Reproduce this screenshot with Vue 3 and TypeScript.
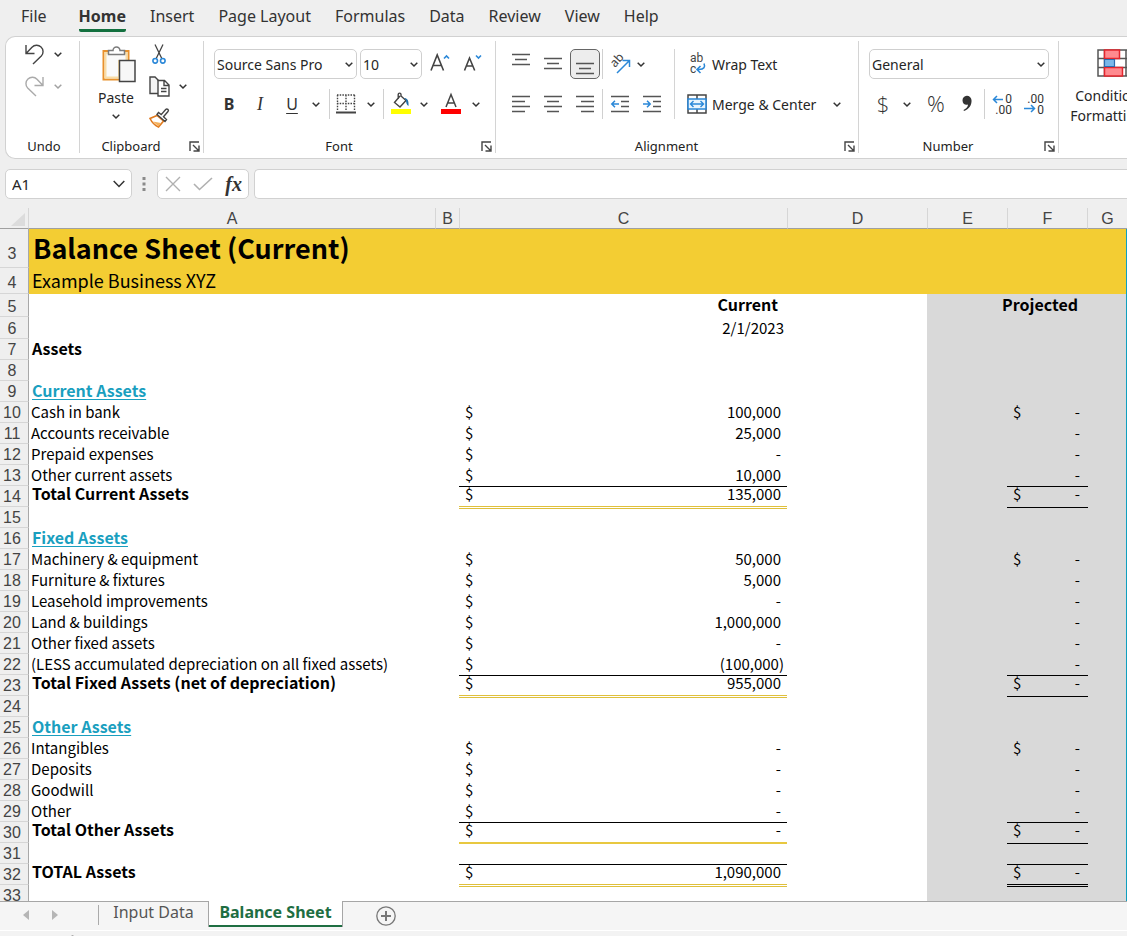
<script setup lang="ts">
import { ref } from 'vue'

interface Row {
  n: number
  label?: string
  kind?: 'section' | 'bold' | 'total'
  dollar?: boolean
  current?: string
  projDollar?: boolean
  projected?: string
  under?: 'double' | 'single'
  projUnder?: 'double' | 'single'
}

const menu = ['File', 'Home', 'Insert', 'Page Layout', 'Formulas', 'Data', 'Review', 'View', 'Help']
const columns = ['A', 'B', 'C', 'D', 'E', 'F', 'G']
const cellName = ref('A1')
const formula = ref('')

const item = (n: number, label: string, current = '-', projDollar = false): Row => ({
  n, label, dollar: true, current, projDollar, projected: '-',
})
const total = (n: number, label: string, current: string, under: 'double' | 'single', projUnder: 'double' | 'single'): Row => ({
  n, label, kind: 'total', dollar: true, current, projDollar: true, projected: '-', under, projUnder,
})

const rows: Row[] = [
  { n: 7, label: 'Assets', kind: 'bold' },
  { n: 8 },
  { n: 9, label: 'Current Assets', kind: 'section' },
  item(10, 'Cash in bank', '100,000', true),
  item(11, 'Accounts receivable', '25,000'),
  item(12, 'Prepaid expenses'),
  item(13, 'Other current assets', '10,000'),
  total(14, 'Total Current Assets', '135,000', 'double', 'single'),
  { n: 15 },
  { n: 16, label: 'Fixed Assets', kind: 'section' },
  item(17, 'Machinery & equipment', '50,000', true),
  item(18, 'Furniture & fixtures', '5,000'),
  item(19, 'Leasehold improvements'),
  item(20, 'Land & buildings', '1,000,000'),
  item(21, 'Other fixed assets'),
  item(22, '(LESS accumulated depreciation on all fixed assets)', '(100,000)'),
  total(23, 'Total Fixed Assets (net of depreciation)', '955,000', 'double', 'single'),
  { n: 24 },
  { n: 25, label: 'Other Assets', kind: 'section' },
  item(26, 'Intangibles', '-', true),
  item(27, 'Deposits'),
  item(28, 'Goodwill'),
  item(29, 'Other'),
  total(30, 'Total Other Assets', '-', 'single', 'single'),
  { n: 31 },
  total(32, 'TOTAL Assets', '1,090,000', 'double', 'double'),
  { n: 33 },
]
</script>

<template>
  <div class="app">
    <nav class="menu" aria-label="Ribbon tabs">
      <button v-for="m in menu" :key="m" class="menu-item" :class="{ active: m === 'Home' }">{{ m }}</button>
    </nav>

    <section class="ribbon" aria-label="Ribbon">
      <div class="group undo">
        <div class="undo-grid">
          <button aria-label="Undo"><svg width="22" height="22" viewBox="0 0 22 22" class="ln"><path d="M2 2v8.500h8.500M2.500 10 8 4.200a6.400 6.400 0 0 1 9.300 8.800L9 21" /></svg></button>
          <button aria-label="Undo history"><svg class="chev" width="8" height="5" viewBox="0 0 8 5"><path d="M.7.7 4 4 7.300.7" /></svg></button>
          <button aria-label="Redo" class="off"><svg width="22" height="22" viewBox="0 0 22 22" class="ln"><path d="M19 2v8.500h-8.500M18.500 10 13 4.200A6.400 6.400 0 0 0 3.700 13L12 21" /></svg></button>
          <button aria-label="Redo history" class="off"><svg class="chev" width="8" height="5" viewBox="0 0 8 5"><path d="M.7.7 4 4 7.300.7" /></svg></button>
        </div>
        <div class="group-label">Undo</div>
      </div>

      <div class="group clipboard">
        <div class="clip-body">
          <button class="paste">
            <svg class="paste-icon" width="34" height="38" viewBox="0 0 34 38" fill="none">
              <path d="M8 6H1.500v28.500H18M20 6h6.500v10" stroke="#e8912d" stroke-width="2" />
              <path d="M3.500 8v24.500H17V16h7.500V8z" fill="#fafafa" stroke="#f9dda6" stroke-width="2" />
              <path d="M6.500 9.500V5.500h4.500a3.500 3.500 0 0 1 7 0h4.500v4z" fill="#fff" stroke="#7c7c7c" stroke-width="1.500" />
              <path d="M17.500 15.500h15.500v21H17.500z" fill="#f7f7f7" stroke="#444" stroke-width="1.500" />
            </svg>
            <span>Paste</span>
            <svg class="chev" width="8" height="5" viewBox="0 0 8 5"><path d="M.7.7 4 4 7.300.7" /></svg>
          </button>
          <div class="clip-side">
            <button aria-label="Cut">
              <svg width="14" height="20" viewBox="0 0 14 20" fill="none" stroke-width="1.300"><path d="M3 .5 9.800 14.500M11 .5 4.200 14.500" stroke="#444" /><circle cx="3.200" cy="16.800" r="2.300" stroke="#2b88d8" stroke-width="1.600" /><circle cx="10.800" cy="16.800" r="2.300" stroke="#2b88d8" stroke-width="1.600" /></svg>
            </button>
            <span></span>
            <button aria-label="Copy">
              <svg width="21" height="21" viewBox="0 0 21 21" class="ln"><path d="M9 17.500H1V1h5l3.500 3.500" fill="#f4f4f4" /><path d="M9 4.500h6.500l4.500 4.500v11H9zM15 5v4.500h5M12 12.500h5.500M12 15.500h5.500" fill="#fff" /></svg>
            </button>
            <button aria-label="Copy options"><svg class="chev" width="8" height="5" viewBox="0 0 8 5"><path d="M.7.7 4 4 7.300.7" /></svg></button>
            <button aria-label="Format Painter">
              <svg width="20" height="20" viewBox="0 0 20 20" fill="none"><path d="M8 7.500 1 10.500c2 4 5 7 8.500 8.500l5-6z" fill="#fff" stroke="#e07a1f" stroke-width="1.600" /><path d="m4 13.500 8 1.500-2.500 3.500z" fill="#f5b05a" /><path d="m8 6.500 8 7 1.500-2-3-2.700 4.500-5.300a1.500 1.500 0 0 0-2.300-2L12.200 6.600 9.500 4.500z" fill="#fff" stroke="#444" stroke-width="1.400" /></svg>
            </button>
          </div>
        </div>
        <div class="group-label">Clipboard<button class="launch" aria-label="Clipboard settings"><svg width="11" height="11" viewBox="0 0 11 11" class="ln"><path d="M1 10V1h9M4 4l5.500 5.500M10 4.500V10H4.500" /></svg></button></div>
      </div>

      <div class="group font">
        <div class="font-top">
          <label class="combo"><select aria-label="Font"><option>Source Sans Pro</option></select><svg class="chev" width="8" height="5" viewBox="0 0 8 5"><path d="M.7.7 4 4 7.300.7" /></svg></label>
          <label class="combo"><select aria-label="Font size"><option>10</option></select><svg class="chev" width="8" height="5" viewBox="0 0 8 5"><path d="M.7.7 4 4 7.300.7" /></svg></label>
          <button aria-label="Increase font size"><svg width="20" height="20" viewBox="0 0 20 20" class="ln"><path d="M1 16.500 7.200 1 13.500 16.500M3.300 11.500h7.800" stroke-width="1.600" /><path d="m14 4.500 2.500-2.500L19 4.500" stroke="#2b88d8" stroke-width="1.600" /></svg></button>
          <button aria-label="Decrease font size"><svg width="20" height="20" viewBox="0 0 20 20" class="ln"><path d="M1.500 16.500 6.500 4l5.200 12.500M3.300 12h6.500" stroke-width="1.600" /><path d="m13 1.500 2.500 2.500L18 1.500" stroke="#2b88d8" stroke-width="1.600" /></svg></button>
        </div>
        <div class="font-bottom">
          <button class="glyph bold">B</button>
          <button class="glyph italic">I</button>
          <button class="glyph underline">U</button>
          <button aria-label="Underline options"><svg class="chev" width="8" height="5" viewBox="0 0 8 5"><path d="M.7.7 4 4 7.300.7" /></svg></button>
          <i class="sep"></i>
          <button aria-label="Borders"><svg width="20" height="20" viewBox="0 0 20 20" fill="none" stroke="#444"><path d="M1 1h18M1 9.500h18M1.500 1v16M10 1v16M18.500 1v16" stroke-width="1.400" stroke-dasharray="1.500 1.200" /><path d="M0 18.500h20" stroke-width="2" /></svg></button>
          <button aria-label="Border options"><svg class="chev" width="8" height="5" viewBox="0 0 8 5"><path d="M.7.7 4 4 7.300.7" /></svg></button>
          <i class="sep"></i>
          <button aria-label="Fill color"><svg width="20" height="22" viewBox="0 0 20 22" fill="none"><path d="m9 3-5.500 6.500L9 14l6-6.500-5-4.500V1.500a1.400 1.400 0 0 0-2.800 0V6" stroke="#444" stroke-width="1.400" /><path d="M13 5c3 0 5 2 4.500 8-2-1-2.500-4-2.500-6z" fill="#1f6fa8" /><path d="M0 16h20v5H0z" fill="#ff0" /></svg></button>
          <button aria-label="Fill color options"><svg class="chev" width="8" height="5" viewBox="0 0 8 5"><path d="M.7.7 4 4 7.300.7" /></svg></button>
          <button aria-label="Font color"><svg width="20" height="22" viewBox="0 0 20 22" fill="none"><path d="m5 14 5-12.500L15 14M6.800 10h6.400" stroke="#444" stroke-width="1.500" /><path d="M0 16h20v5H0z" fill="#f00" /></svg></button>
          <button aria-label="Font color options"><svg class="chev" width="8" height="5" viewBox="0 0 8 5"><path d="M.7.7 4 4 7.300.7" /></svg></button>
        </div>
        <div class="group-label">Font<button class="launch" aria-label="Font settings"><svg width="11" height="11" viewBox="0 0 11 11" class="ln"><path d="M1 10V1h9M4 4l5.500 5.500M10 4.500V10H4.500" /></svg></button></div>
      </div>

      <div class="group align">
        <div class="align-body">
          <div class="align-grid">
            <button aria-label="Top align"><svg width="18" height="22" viewBox="0 0 18 22" class="bars"><path d="M0 1.500h18M3 6.500h12M0 11.500h18" /></svg></button>
            <button aria-label="Middle align"><svg width="18" height="22" viewBox="0 0 18 22" class="bars"><path d="M0 5.500h18M3 10.500h12M0 15.500h18" /></svg></button>
            <button aria-label="Bottom align" class="pressed"><svg width="18" height="22" viewBox="0 0 18 22" class="bars"><path d="M0 10.500h18M3 15.500h12M0 20.500h18" /></svg></button>
            <i class="sep"></i>
            <button aria-label="Orientation"><svg width="22" height="22" viewBox="0 0 22 22"><text x="0" y="0" class="ab" transform="translate(6 15) rotate(-48)">ab</text><path d="M8 20 20 8M13.500 7.500h7V14" fill="none" stroke="#2b88d8" stroke-width="1.500" /></svg></button>
            <button aria-label="Orientation options"><svg class="chev" width="8" height="5" viewBox="0 0 8 5"><path d="M.7.7 4 4 7.300.7" /></svg></button>
          </div>
          <div class="align-grid second">
            <button aria-label="Align left"><svg width="18" height="18" viewBox="0 0 18 18" class="bars"><path d="M0 1.500h18M0 6.500h13M0 11.500h18M0 16.500h13" /></svg></button>
            <button aria-label="Center"><svg width="18" height="18" viewBox="0 0 18 18" class="bars"><path d="M0 1.500h18M3 6.500h12M0 11.500h18M3 16.500h12" /></svg></button>
            <button aria-label="Align right"><svg width="18" height="18" viewBox="0 0 18 18" class="bars"><path d="M0 1.500h18M5 6.500h13M0 11.500h18M5 16.500h13" /></svg></button>
            <i class="sep"></i>
            <button aria-label="Decrease indent"><svg width="18" height="18" viewBox="0 0 18 18" class="bars"><path d="M0 1.500h18M10 6.500h8M10 11.500h8M0 16.500h18" /><path d="M8 9H1M4 5.800.8 9 4 12.200" stroke="#2b88d8" /></svg></button>
            <button aria-label="Increase indent"><svg width="18" height="18" viewBox="0 0 18 18" class="bars"><path d="M0 1.500h18M10 6.500h8M10 11.500h8M0 16.500h18" /><path d="M0 9h7M4 5.800 7.200 9 4 12.200" stroke="#2b88d8" /></svg></button>
          </div>
          <i class="tall-sep"></i>
          <button class="wide wrap">
            <svg width="20" height="22" viewBox="0 0 20 22"><text x="3" y="9" class="abc">ab</text><text x="3" y="20" class="abc">c</text><path d="M17 10.500c1.500 3.500 0 6-5 6H10M13.500 13 10 16.500l3.500 3.500" fill="none" stroke="#2b88d8" stroke-width="1.600" /></svg>
            <span>Wrap Text</span>
          </button>
          <button class="wide merge">
            <svg width="20" height="20" viewBox="0 0 20 20" fill="none"><path d="M1 1h18v18H1zM10 1v4M10 15v4" stroke="#444" stroke-width="1.500" /><path d="M1 5h18v10H1z" fill="#e9f4fc" stroke="#2b88d8" stroke-width="1.600" /><path d="M4 10h12M6.500 7 3.500 10l3 3M13.500 7l3 3-3 3" stroke="#2b88d8" stroke-width="1.400" /></svg>
            <span>Merge &amp; Center</span>
            <svg class="chev" width="8" height="5" viewBox="0 0 8 5"><path d="M.7.7 4 4 7.300.7" /></svg>
          </button>
        </div>
        <div class="group-label">Alignment<button class="launch" aria-label="Alignment settings"><svg width="11" height="11" viewBox="0 0 11 11" class="ln"><path d="M1 10V1h9M4 4l5.500 5.500M10 4.500V10H4.500" /></svg></button></div>
      </div>

      <div class="group number">
        <label class="combo"><select aria-label="Number format"><option>General</option></select><svg class="chev" width="8" height="5" viewBox="0 0 8 5"><path d="M.7.7 4 4 7.300.7" /></svg></label>
        <div class="number-grid">
          <button class="glyph money">$</button>
          <button aria-label="Currency options"><svg class="chev" width="8" height="5" viewBox="0 0 8 5"><path d="M.7.7 4 4 7.300.7" /></svg></button>
          <button class="glyph money">%</button>
          <button aria-label="Comma style"><svg width="12" height="18" viewBox="0 0 12 18"><path d="M1.500 5.500a4.500 4.500 0 0 1 9-.5c.5 5-2.500 9-7.500 11l-.5-1c3-1.500 4.500-3.500 4.500-5.500C4.500 10.500 1.500 9 1.500 5.500z" fill="#333" /></svg></button>
          <i class="sep"></i>
          <button aria-label="Increase decimal"><svg width="20" height="22" viewBox="0 0 20 22"><text x="20" y="10" class="dec">0</text><text x="20" y="21" class="dec">.00</text><path d="M11 6.500H1.500M5 3 1.500 6.500 5 10" fill="none" stroke="#2b88d8" stroke-width="1.500" /></svg></button>
          <button aria-label="Decrease decimal"><svg width="20" height="22" viewBox="0 0 20 22"><text x="20" y="10" class="dec">.00</text><text x="20" y="21" class="dec">0</text><path d="M0 15.500h10.500M7 12l3.500 3.500L7 19" fill="none" stroke="#2b88d8" stroke-width="1.500" /></svg></button>
        </div>
        <div class="group-label">Number<button class="launch" aria-label="Number settings"><svg width="11" height="11" viewBox="0 0 11 11" class="ln"><path d="M1 10V1h9M4 4l5.500 5.500M10 4.500V10H4.500" /></svg></button></div>
      </div>

      <div class="group styles">
        <button class="cond">
          <svg width="32" height="28" viewBox="0 0 32 28" fill="none"><path d="M1 1h30v26H1zM1 9.500h30M1 18.500h30M7.500 1v26M29 1v26" stroke="#555" stroke-width="1.500" /><path d="M7.500 1h15v8.500h-15zM7.500 18.500h18V27h-18z" fill="#ff8a8f" stroke="#e3262e" stroke-width="1.500" /><path d="M7.500 10.500h10v7h-10z" fill="#7ab8ea" stroke="#2b6cb0" stroke-width="1.200" /></svg>
          <span>Conditional</span>
          <span class="cond-more">Formatting <svg class="chev" width="8" height="5" viewBox="0 0 8 5"><path d="M.7.7 4 4 7.300.7" /></svg></span>
        </button>
      </div>
    </section>

    <section class="formula-bar" aria-label="Formula bar">
      <div class="name-box"><input v-model="cellName" aria-label="Name box" /><button aria-label="Names"><svg class="chev" width="12" height="8" viewBox="0 0 12 8"><path d="M.7 1 6 6.500 11.300 1" /></svg></button></div>
      <svg class="dots" width="4" height="14" viewBox="0 0 4 14" fill="#8a8a8a"><path d="M.5 0h3v3h-3zM.5 5.500h3v3h-3zM.5 11h3v3h-3z" /></svg>
      <div class="fx">
        <button aria-label="Cancel"><svg width="16" height="16" viewBox="0 0 16 16" fill="none" stroke="#b0b0b0" stroke-width="1.400"><path d="m1 1 14 14M15 1 1 15" /></svg></button>
        <button aria-label="Enter"><svg width="20" height="14" viewBox="0 0 20 14" fill="none" stroke="#b0b0b0" stroke-width="1.600"><path d="m1 7 5.500 5.500L19 1" /></svg></button>
        <button class="fx-btn">fx</button>
      </div>
      <input v-model="formula" class="formula" aria-label="Formula" />
    </section>

    <main class="sheet">
      <table>
        <colgroup>
          <col class="c-head" /><col /><col class="c-b" /><col class="c-c" /><col class="c-d" /><col class="c-e" /><col class="c-f" /><col class="c-g" />
        </colgroup>
        <thead>
          <tr>
            <th class="corner"><svg width="14" height="13" viewBox="0 0 14 13"><path d="M14 0v13H0z" fill="#dcdcdc" /></svg></th>
            <th v-for="c in columns" :key="c" scope="col">{{ c }}</th>
          </tr>
        </thead>
        <tbody>
          <tr class="r-title"><th scope="row">3</th><td colspan="7">Balance Sheet (Current)</td></tr>
          <tr class="r-sub"><th scope="row">4</th><td colspan="7">Example Business XYZ</td></tr>
          <tr class="r-tall">
            <th scope="row">5</th><td></td><td></td><td class="num head">Current</td><td></td>
            <td class="num head proj" colspan="2">Projected</td><td class="proj edge"></td>
          </tr>
          <tr class="r-date">
            <th scope="row">6</th><td></td><td></td><td class="num date">2/1/2023</td><td></td>
            <td class="proj"></td><td class="proj"></td><td class="proj edge"></td>
          </tr>
          <tr v-for="r in rows" :key="r.n" :class="r.kind">
            <th scope="row">{{ r.n }}</th>
            <td class="label"><a v-if="r.kind === 'section'" href="#">{{ r.label }}</a><template v-else>{{ r.label }}</template></td>
            <td></td>
            <td :class="r.under && 'line ' + r.under">
              <div v-if="r.dollar" class="acct"><span>$</span><span :class="{ neg: r.current?.startsWith('(') }">{{ r.current }}</span></div>
            </td>
            <td></td>
            <td class="proj"></td>
            <td class="proj" :class="r.projUnder && 'line ' + r.projUnder">
              <div v-if="r.projected" class="acct"><span>{{ r.projDollar ? '$' : '' }}</span><span>{{ r.projected }}</span></div>
            </td>
            <td class="proj edge"></td>
          </tr>
        </tbody>
      </table>
    </main>

    <footer class="tabs">
      <button class="nav" aria-label="Previous sheet"><svg width="6" height="10" viewBox="0 0 6 10"><path d="M6 0v10L0 5z" fill="#b5b5b5" /></svg></button>
      <button class="nav" aria-label="Next sheet"><svg width="6" height="10" viewBox="0 0 6 10"><path d="M0 0v10l6-5z" fill="#b5b5b5" /></svg></button>
      <i class="tab-sep"></i>
      <button class="tab">Input Data</button>
      <button class="tab current">Balance Sheet</button>
      <button class="add" aria-label="New sheet"><svg width="20" height="20" viewBox="0 0 20 20" fill="none" stroke="#777"><circle cx="10" cy="10" r="9.200" stroke-width="1.300" /><path d="M10 5v10M5 10h10" stroke-width="2" /></svg></button>
    </footer>
    <div class="status"><svg width="5" height="5" viewBox="0 0 5 5"><circle cx="2.500" cy="2.500" r="2" fill="#555" /></svg></div>
  </div>
</template>

<style>
body { margin: 0; background: #efefef; }
</style>

<style scoped>
* { box-sizing: border-box; }
.app {
  --ui: "Noto Sans", "Open Sans", sans-serif;
  --cell: "Noto Sans CJK SC", "Noto Sans", sans-serif;
  display: flex; flex-direction: column; height: 100vh; overflow: hidden;
  background: #efefef; color: #262626; font: 14px/20px var(--ui);
}
button { border: 0; padding: 0; background: none; color: inherit; font: inherit; display: flex; align-items: center; justify-content: center; white-space: nowrap; }
svg { display: block; flex: none; overflow: visible; }
i { font-style: normal; }
.ln { fill: none; stroke: #444; stroke-width: 1.400; }
.chev { fill: none; stroke: #333; stroke-width: 1.500; }
.bars { fill: none; stroke: #555; stroke-width: 1.500; }
.off { opacity: 0.45; }
.sep { width: 1px; height: 30px; background: #d0d0d0; }

.menu { flex: none; display: flex; gap: 24px; height: 36px; padding: 0 21px; }
.menu-item { height: 32px; padding-top: 3px; font-size: 16px; color: #333; border-bottom: 3px solid transparent; }
.menu-item:first-child { margin-right: 8px; }
.menu-item.active { font-weight: 700; border-color: #13703f; border-radius: 2px; }

.ribbon { flex: none; display: flex; height: 123px; margin-left: 5px; background: #fff; border: 1px solid #d1d1d1; border-right: 0; border-radius: 10px 0 0 10px; overflow: hidden; }
.group { flex: none; position: relative; display: flex; flex-direction: column; padding-top: 12px; }
.group:not(.styles)::after { content: ""; position: absolute; right: 0; top: 4px; bottom: 5px; width: 1px; background: #d4d4d4; }
.group-label { display: flex; justify-content: center; align-items: center; margin-top: auto; height: 24px; padding-right: 22px; font-size: 13px; position: relative; color: #222; }
.undo .group-label { padding: 0 0 0 2px; }
.launch { position: absolute; right: 4px; top: 7px; }
.undo { width: 74px; }
.undo-grid { display: grid; grid-template-columns: 30px 16px; grid-auto-rows: 32px; margin: -11px 0 0 14px; }
.clipboard { width: 124px; padding-top: 0; }
.clip-body { display: flex; padding-top: 1px; }
.paste { flex-direction: column; width: 72px; height: 84px; padding-top: 7px; justify-content: flex-start; }
.paste span { margin: 5px 0 6px; }
.paste-icon { margin-left: 5px; }
.clip-side { display: grid; grid-template-columns: 26px 22px; grid-auto-rows: 32px; margin-left: -6px; }
.font { width: 292px; }
.font-top { display: grid; grid-template-columns: 143px 62px 30px 30px; column-gap: 3px; margin-left: 10px; height: 30px; }
.font-bottom { display: grid; grid-template-columns: 30px 32px 32px 16px 10px 24px 25px 1px 34px 12px 42px 8px; margin: 10px 0 0 10px; height: 30px; align-items: center; justify-items: center; }
.combo { position: relative; display: block; height: 30px; }
.combo select { appearance: none; width: 100%; height: 30px; border: 1px solid #cfcfcf; border-radius: 5px; background: #fff; padding: 1px 0 0 2px; font: 14px/20px var(--ui); color: #262626; }
.combo .chev { position: absolute; right: 4px; top: 13px; }
.glyph { font-size: 16px; color: #333; }
.bold { font-weight: 700; }
.italic { font-family: "Liberation Serif", serif; font-style: italic; font-size: 18px; }
.underline { text-decoration: underline; text-underline-offset: 3px; }

.align { width: 363px; }
.align-body { display: grid; grid-template-columns: 169px 1px 1fr; grid-template-rows: 30px 30px; row-gap: 10px; padding-left: 9px; }
.align-grid { display: grid; grid-template-columns: 32px 32px 32px 3px 32px 10px; grid-column: 1; grid-row: 1; align-items: center; justify-items: center; }
.align-grid.second { grid-template-columns: 32px 32px 32px 3px 32px 32px; grid-row: 2; }
.pressed { width: 30px; height: 30px; background: #ededed; border: 1px solid #666; border-radius: 5px; }
.tall-sep { grid-column: 2; grid-row: 1 / 3; background: #d4d4d4; }
.wide { grid-column: 3; justify-content: flex-start; padding-left: 12px; gap: 5px; font-size: 14px; line-height: 22px; }
.wide span { padding-top: 1px; }
.wrap { grid-row: 1; }
.merge { grid-row: 2; }
.merge .chev { margin-left: 12px; }
.ab { font: 12px var(--ui); fill: #444; }
.abc { font: 12px Roboto, sans-serif; fill: #444; }
.dec { font: 12px Roboto, sans-serif; fill: #333; text-anchor: end; }

.number { width: 200px; }
.number .combo { width: 180px; margin-left: 10px; }
.number-grid { display: grid; grid-template-columns: 26px 24px 32px 32px 3px 32px 32px; height: 30px; margin: 10px 0 0 10px; align-items: center; justify-items: center; }
.money { font-family: "Open Sans", "Noto Sans", sans-serif; font-weight: 300; font-size: 22px; padding: 0 0 2px 2px; }
.styles { width: 120px; }
.cond { flex-direction: column; width: 84px; margin-left: 12px; font-size: 14px; }
.cond > svg { margin-bottom: 9px; }
.cond-more { display: flex; align-items: center; gap: 4px; }

.formula-bar { flex: none; display: flex; align-items: center; height: 30px; margin: 10px 0 9px 5px; }
.name-box { display: flex; width: 127px; height: 30px; background: #fff; border: 1px solid #d1d1d1; border-radius: 5px; padding: 0 6px; }
.name-box input { flex: 1; min-width: 0; border: 0; outline: 0; padding: 0; background: none; font: 15px/20px var(--ui); color: #262626; }
.dots { margin: 0 11px 0 10px; }
.fx { display: flex; justify-content: space-between; width: 92px; height: 30px; padding: 0 6px 0 7px; background: #fff; border: 1px solid #d1d1d1; border-radius: 5px; }
.fx-btn { font: italic 700 20px/24px "Liberation Serif", serif; color: #333; }
.formula { flex: 1; min-width: 0; height: 30px; margin-left: 5px; background: #fff; border: 1px solid #d1d1d1; border-right: 0; border-radius: 5px 0 0 5px; outline: 0; }

.sheet { flex: 1 1 0; min-height: 0; overflow: hidden; background: #fff; }
table { width: 100%; table-layout: fixed; border-collapse: separate; border-spacing: 0; font: 15px/20px var(--cell); color: #000; }
.c-head { width: 29px; }
.c-b { width: 24px; }
.c-c { width: 328px; }
.c-d { width: 140px; }
.c-e { width: 80px; }
.c-f { width: 80px; }
.c-g { width: 40px; }
th { font: 16px/18px "Liberation Sans", Arial, sans-serif; color: #444; background: #efefef; padding: 0; }
thead th { height: 21px; padding-top: 2px; border-bottom: 1px solid #a0a0a0; border-left: 1px solid #d6d6d6; }
thead .corner { border-left: 0; border-right: 1px solid #d6d6d6; }
thead .corner + th { border-left: 0; }
thead .corner svg { margin-left: 11px; }
tbody th { border-right: 1px solid #a8a8a8; border-bottom: 1px solid #d6d6d6; height: 21px; padding-right: 4px; vertical-align: bottom; }
td { padding: 0; height: 21px; white-space: nowrap; vertical-align: top; }
.r-title td, .r-sub td { background: #f3cd33; border-right: 1px solid #0f9fc0; }
.r-title th { height: 39px; padding-bottom: 4px; }
.r-title td { padding-left: 4px; font-size: 27px; font-weight: 700; line-height: 38px; }
.r-sub th { height: 26px; padding-bottom: 1px; }
.r-sub td { padding-left: 3px; font-size: 18px; line-height: 24px; }
.r-tall th { height: 23px; }
.r-tall td { line-height: 21px; }
.r-date th { height: 22px; }
.r-date td { line-height: 21px; }
.proj { background: #d9d9d9; }
.edge { border-right: 1px solid #0f9fc0; }
.num { text-align: right; }
.head { font-weight: 700; font-size: 16px; padding-right: 9px; }
.date { padding-right: 3px; }
.label { padding-left: 2px; }
.section .label, .bold .label, .total .label { padding-left: 3px; font-weight: 700; font-size: 16px; }
.section .label, .bold .label { line-height: 19px; }
.label a { color: #1a9fbf; text-underline-offset: 2px; }
.total td { line-height: 15px; }
.acct { display: flex; justify-content: space-between; padding: 0 6px; }
.proj .acct { padding-right: 7px; }
.neg { margin-right: -3px; }
.line { position: relative; }
.line::after { content: ""; position: absolute; left: 0; right: 0; top: 0; bottom: -2px; border-top: 1px solid #000; border-bottom: 3px double #dfc03c; }
.line.single::after { bottom: -1px; border-bottom: 2px solid #e8c840; }
.proj.line::after { right: -1px; bottom: -2px; border-bottom: 3px double #000; }
.proj.line.single::after { bottom: -1px; border-bottom: 1px solid #000; }

.tabs { flex: none; display: flex; height: 29px; background: #f5f5f5; box-shadow: inset 0 1px #a6a6a6; }
.nav { width: 29px; height: 28px; }
.nav:first-child { margin-left: 11px; }
.tab-sep { width: 1px; height: 20px; margin: 4px 0 0 29px; background: #aaa; }
.tab { width: 109px; height: 26px; font-size: 16px; color: #555; padding-bottom: 4px; }
.tab.current { width: 135px; font-weight: 700; color: #1e6e42; background: #fff; border: solid #a6a6a6; border-width: 0 1px; box-shadow: inset 0 -2px #1e6e42; }
.add { margin-left: 33px; }
.status { flex: none; height: 6px; overflow: hidden; background: #f3f3f3; border-top: 1px solid #fff; padding: 4px 0 0 70px; }
</style>
